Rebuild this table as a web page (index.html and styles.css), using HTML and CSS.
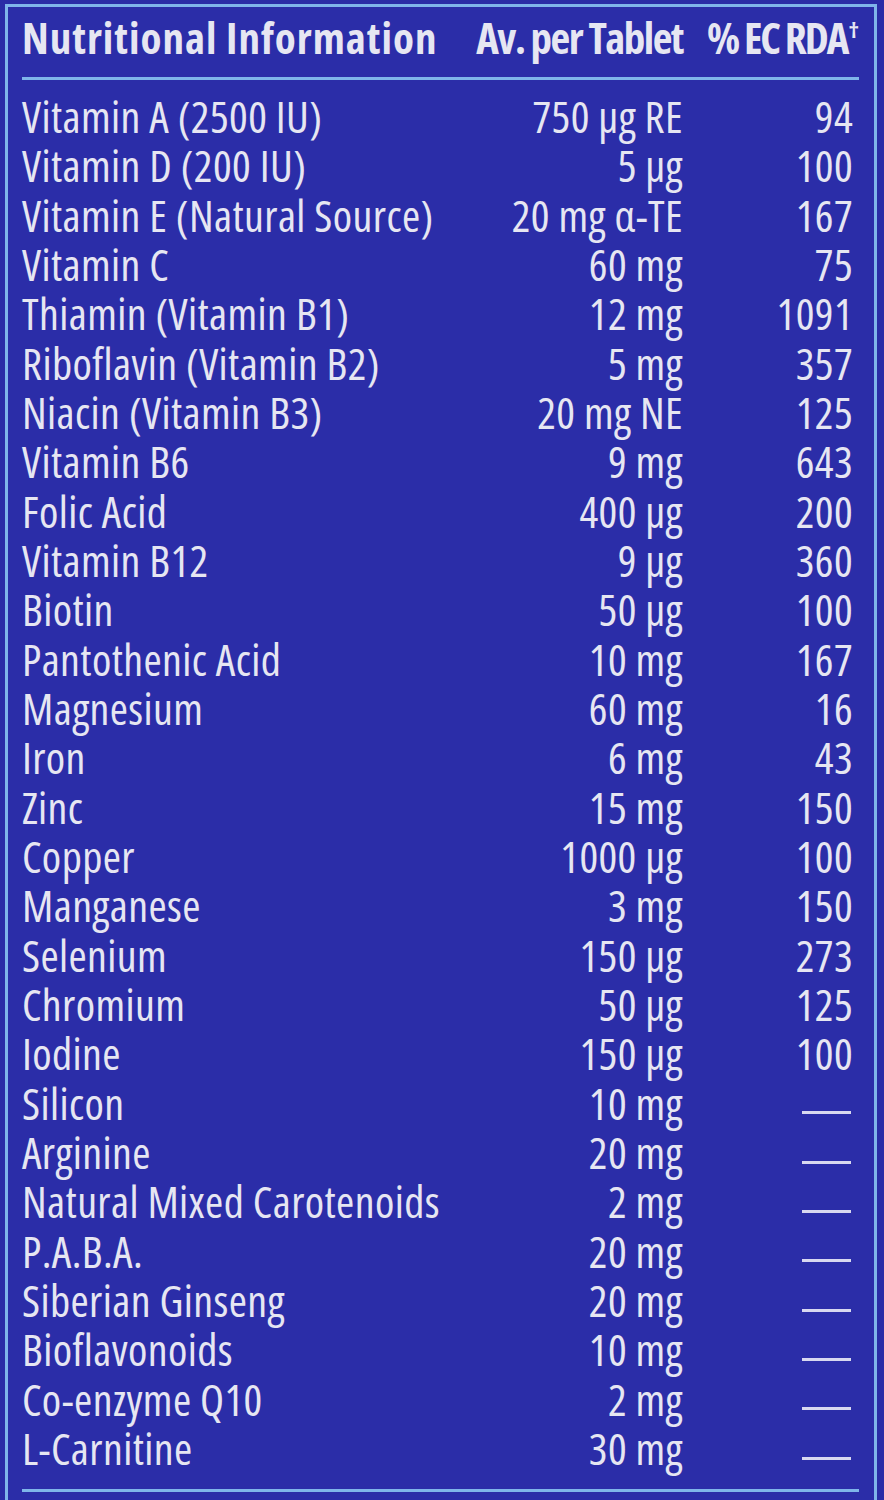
FILE: index.html
```html
<!DOCTYPE html>
<html>
<head>
<meta charset="utf-8">
<link rel="stylesheet" href="styles.css">
</head>
<body>
<div class="frame">
  <div class="row head">
    <span class="name">Nutritional Information</span>
    <span class="val">Av. per Tablet</span>
    <span class="rda">% EC RDA<sup>†</sup></span>
  </div>
  <div class="rule top"></div>
  <div class="rows">
    <div class="row"><span class="name">Vitamin A (2500 IU)</span><span class="val">750 µg RE</span><span class="rda">94</span></div>
    <div class="row"><span class="name">Vitamin D (200 IU)</span><span class="val">5 µg</span><span class="rda">100</span></div>
    <div class="row"><span class="name">Vitamin E (Natural Source)</span><span class="val">20 mg α-TE</span><span class="rda">167</span></div>
    <div class="row"><span class="name">Vitamin C</span><span class="val">60 mg</span><span class="rda">75</span></div>
    <div class="row"><span class="name">Thiamin (Vitamin B1)</span><span class="val">12 mg</span><span class="rda">1091</span></div>
    <div class="row"><span class="name">Riboflavin (Vitamin B2)</span><span class="val">5 mg</span><span class="rda">357</span></div>
    <div class="row"><span class="name">Niacin (Vitamin B3)</span><span class="val">20 mg NE</span><span class="rda">125</span></div>
    <div class="row"><span class="name">Vitamin B6</span><span class="val">9 mg</span><span class="rda">643</span></div>
    <div class="row"><span class="name">Folic Acid</span><span class="val">400 µg</span><span class="rda">200</span></div>
    <div class="row"><span class="name">Vitamin B12</span><span class="val">9 µg</span><span class="rda">360</span></div>
    <div class="row"><span class="name">Biotin</span><span class="val">50 µg</span><span class="rda">100</span></div>
    <div class="row"><span class="name">Pantothenic Acid</span><span class="val">10 mg</span><span class="rda">167</span></div>
    <div class="row"><span class="name">Magnesium</span><span class="val">60 mg</span><span class="rda">16</span></div>
    <div class="row"><span class="name">Iron</span><span class="val">6 mg</span><span class="rda">43</span></div>
    <div class="row"><span class="name">Zinc</span><span class="val">15 mg</span><span class="rda">150</span></div>
    <div class="row"><span class="name">Copper</span><span class="val">1000 µg</span><span class="rda">100</span></div>
    <div class="row"><span class="name">Manganese</span><span class="val">3 mg</span><span class="rda">150</span></div>
    <div class="row"><span class="name">Selenium</span><span class="val">150 µg</span><span class="rda">273</span></div>
    <div class="row"><span class="name">Chromium</span><span class="val">50 µg</span><span class="rda">125</span></div>
    <div class="row"><span class="name">Iodine</span><span class="val">150 µg</span><span class="rda">100</span></div>
    <div class="row"><span class="name">Silicon</span><span class="val">10 mg</span><span class="rda"><span class="dash"></span></span></div>
    <div class="row"><span class="name">Arginine</span><span class="val">20 mg</span><span class="rda"><span class="dash"></span></span></div>
    <div class="row"><span class="name">Natural Mixed Carotenoids</span><span class="val">2 mg</span><span class="rda"><span class="dash"></span></span></div>
    <div class="row"><span class="name">P.A.B.A.</span><span class="val">20 mg</span><span class="rda"><span class="dash"></span></span></div>
    <div class="row"><span class="name">Siberian Ginseng</span><span class="val">20 mg</span><span class="rda"><span class="dash"></span></span></div>
    <div class="row"><span class="name">Bioflavonoids</span><span class="val">10 mg</span><span class="rda"><span class="dash"></span></span></div>
    <div class="row"><span class="name">Co-enzyme Q10</span><span class="val">2 mg</span><span class="rda"><span class="dash"></span></span></div>
    <div class="row"><span class="name">L-Carnitine</span><span class="val">30 mg</span><span class="rda"><span class="dash"></span></span></div>
  </div>
  <div class="rule bottom"></div>
</div>
</body>
</html>
```
FILE: styles.css
```css
html, body {
  margin: 0;
  padding: 0;
  background: #2a2ca6;
  overflow: hidden;
}
body {
  width: 884px;
  height: 1500px;
  font-family: "Open Sans", "DejaVu Sans", sans-serif;
  font-stretch: 75%;
  color: #e6e6f2;
}
.frame {
  box-sizing: border-box;
  margin: 4px 0 0 5px;
  width: 872px;
  height: 1496px;
  overflow: hidden;
  border: 3px solid #7fb5ea;
  border-bottom: none;
  padding: 6px 17px 0 14px;
  background: #2b2da8;
}
.row {
  display: grid;
  grid-template-columns: minmax(0, 1fr) 250px 174px;
  align-items: center;
  height: 49.33px;
  line-height: 49.33px;
  font-size: 44px;
  letter-spacing: 0.4px;
  white-space: nowrap;
}
.row.head {
  height: 50px;
  line-height: 50px;
  font-weight: bold;
  font-size: 43px;
}
.head .name {
  letter-spacing: 1px;
}
.head .val {
  letter-spacing: -1.5px;
}
.head .rda {
  letter-spacing: -2px;
  padding-right: 0;
}
.val {
  text-align: right;
}
.rda {
  text-align: right;
  padding-right: 4px;
}
sup {
  font-size: 22px;
  vertical-align: baseline;
  line-height: 1;
  position: relative;
  top: -16px;
  margin-left: 1px;
}
.dash {
  display: inline-block;
  width: 49px;
  height: 3px;
  background: #d8d8f0;
  margin-right: 2px;
  vertical-align: middle;
  position: relative;
  top: 5px;
}
.rule {
  height: 3px;
  background: #7fb5ea;
}
.rule.top {
  margin: 14px 0 12px 0;
  width: 837px;
}
.rule.bottom {
  margin-top: 16px;
  width: 837px;
}
```
